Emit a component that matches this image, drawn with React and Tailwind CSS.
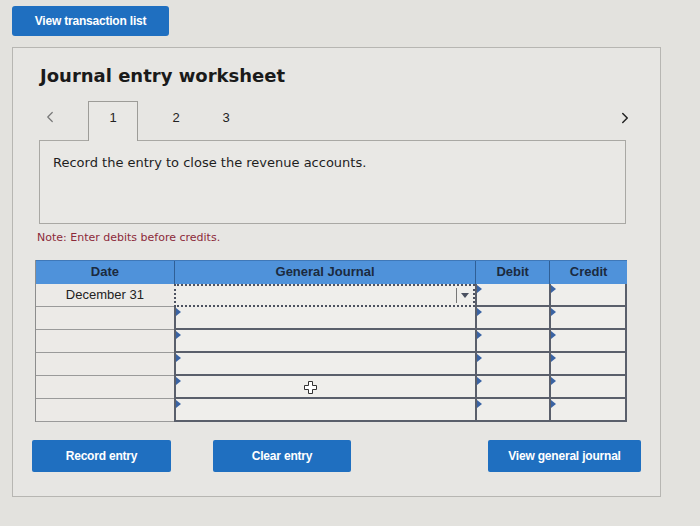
import React from "react";
import { ChevronLeft, ChevronRight } from "lucide-react";

const sans = { fontFamily: '"Liberation Sans", Arial, sans-serif' };
const verdana = { fontFamily: '"DejaVu Sans", Verdana, sans-serif' };

// small blue flag shown at the top-left corner of each input cell
const Flag = () => (
  <span className="absolute left-0 top-[1px] w-0 h-0 border-y-[4px] border-y-transparent border-l-[5px] border-l-[#3a63a3]" />
);

const InputCell = ({ width, children, last }) => (
  <div
    className={`relative h-full border-l-2 border-b-2 border-[#5a5f6b] bg-[#efeeeb] ${width} ${last ? "border-r-2" : ""}`}
  >
    <Flag />
    {children}
  </div>
);

const rows = ["December 31", "", "", "", "", ""];

export default function App() {
  return (
    <div className="w-[700px] h-[526px] bg-[#e3e2de] pt-[6px] pl-[12px] overflow-hidden" style={sans}>
      <button className="w-[157px] h-[30px] rounded-[3px] bg-[#1f6fc0] text-white text-[12px] font-bold tracking-[-0.2px]">
        View transaction list
      </button>

      <div className="mt-[11px] w-[649px] h-[450px] border border-[#b7b6b2] bg-[#e7e6e3]">
        <h1 className="ml-[27px] mt-[17px] text-[18px] leading-[22px] font-bold text-[#1a1a1a]" style={verdana}>
          Journal entry worksheet
        </h1>

        {/* tabs */}
        <div className="ml-[26px] mt-[13px] w-[587px] h-[40px] flex items-center relative">
          <ChevronLeft className="w-[18px] h-[18px] text-[#777] ml-[2px] mb-[6px]" strokeWidth={1.6} />
          <div className="ml-[29px] w-[50px] h-[40px] border border-b-0 border-[#9d9c98] bg-[#e9e8e5] flex items-start pt-[6px] justify-center text-[13px] text-[#222] relative top-[1px] z-10">
            1
          </div>
          <div className="ml-[13px] w-[50px] text-center text-[13px] text-[#222] mb-[5px]">2</div>
          <div className="w-[50px] text-center text-[13px] text-[#222] mb-[5px]">3</div>
          <ChevronRight className="w-[18px] h-[18px] text-[#222] ml-auto mr-[-8px] mb-[5px]" strokeWidth={2} />
        </div>

        {/* instructions */}
        <div
          className="ml-[26px] w-[587px] h-[84px] border border-[#a9a8a4] bg-[#e9e8e5] pl-[13px] pt-[12px] text-[13px] text-[#1e1e1e]"
          style={verdana}
        >
          Record the entry to close the revenue accounts.
        </div>

        <p className="ml-[24px] mt-[6px] text-[11px] text-[#8c2a3a]" style={verdana}>
          Note: Enter debits before credits.
        </p>

        {/* journal table */}
        <div className="ml-[22px] mt-[13px] w-[592px] border-l border-[#8d8d8d]">
          <div className="flex h-[24px] bg-[#4f92da] text-[13px] font-bold text-[#1b2a3e] border-t border-[#3f78b8]">
            <div className="w-[138px] flex items-center justify-center">Date</div>
            <div className="w-[302px] flex items-center justify-center border-l border-[#2f5f96]">General Journal</div>
            <div className="w-[74px] flex items-center justify-center border-l border-[#2f5f96]">Debit</div>
            <div className="w-[78px] flex items-center justify-center border-l border-[#2f5f96]">Credit</div>
          </div>
          {rows.map((d, i) => (
            <div key={i} className="flex h-[23px]">
              <div className="w-[138px] h-full border-b border-[#9a9a9a] bg-[#eceae7] flex items-center justify-center text-[13px] text-[#222]">
                {d}
              </div>
              {i === 0 ? (
                <div className="relative w-[302px] h-full border-2 border-dotted border-[#4d5260] bg-[#efeeeb]">
                  <div className="absolute right-[16px] top-[2px] bottom-[2px] border-l border-[#777]" />
                  <span className="absolute right-[4px] top-[7px] w-0 h-0 border-x-[4px] border-x-transparent border-t-[5px] border-t-[#4a5060]" />
                </div>
              ) : (
                <InputCell width="w-[302px]">
                  {i === 4 && (
                    <svg className="absolute left-[128px] top-[5px]" width="13" height="13" viewBox="0 0 13 13">
                      <path d="M4.5 0.5h4v4h4v4h-4v4h-4v-4h-4v-4h4z" fill="#fff" stroke="#333" strokeWidth="1" />
                    </svg>
                  )}
                </InputCell>
              )}
              <InputCell width="w-[74px]" />
              <InputCell width="w-[78px]" last />
            </div>
          ))}
        </div>

        {/* actions */}
        <div className="flex mt-[18px] ml-[19px] items-start">
          <button className="w-[139px] h-[32px] rounded-[2px] bg-[#1f6fc0] text-white text-[12px] font-bold tracking-[-0.2px]">
            Record entry
          </button>
          <button className="ml-[42px] w-[138px] h-[32px] rounded-[2px] bg-[#1f6fc0] text-white text-[12px] font-bold tracking-[-0.2px]">
            Clear entry
          </button>
          <button className="ml-[137px] w-[153px] h-[32px] rounded-[2px] bg-[#1f6fc0] text-white text-[12px] font-bold tracking-[-0.2px]">
            View general journal
          </button>
        </div>
      </div>
    </div>
  );
}
